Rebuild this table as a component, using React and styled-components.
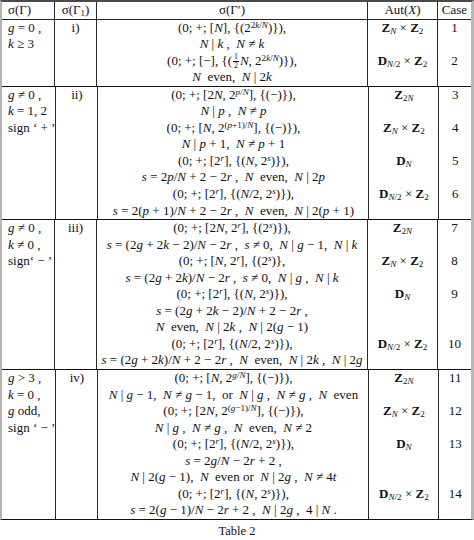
import React from "react";
import styled, { createGlobalStyle } from "styled-components";

const GlobalStyle = createGlobalStyle`
  html, body { margin: 0; padding: 0; background: #fff; }
  body {
    font-family: "Liberation Serif", "DejaVu Serif", serif;
    color: #111;
  }
`;

const LINE = 16.55;

// tiny math markup: single letters italic, words upright, ^{..} sup, _{..} sub
function parse(s, base = 0) {
  const out = [];
  let i = 0;
  let buf = "";
  const flush = (k) => {
    if (buf) {
      out.push(<span key={base + "t" + k}>{buf}</span>);
      buf = "";
    }
  };
  while (i < s.length) {
    const c = s[i];
    if ((c === "^" || c === "_") && s[i + 1] === "{") {
      flush(i);
      let depth = 1;
      let j = i + 2;
      while (j < s.length && depth) {
        if (s[j] === "{") depth++;
        else if (s[j] === "}") depth--;
        j++;
      }
      const inner = parse(s.slice(i + 2, j - 1), base + "-" + i);
      out.push(
        c === "^" ? <Sup key={base + "s" + i}>{inner}</Sup> : <Sub key={base + "s" + i}>{inner}</Sub>
      );
      i = j;
      continue;
    }
    if (c === "½") {
      flush(i);
      out.push(
        <Frac key={base + "f" + i}>
          <span>1</span>
          <span>2</span>
        </Frac>
      );
      i++;
      continue;
    }
    if (/[A-Za-z]/.test(c)) {
      flush(i);
      let j = i;
      while (j < s.length && /[A-Za-z]/.test(s[j])) j++;
      const w = s.slice(i, j);
      out.push(w.length === 1 ? <I key={base + "v" + i}>{w}</I> : <Word key={base + "w" + i}>{w}</Word>);
      i = j;
      continue;
    }
    buf += c;
    i++;
  }
  flush("end");
  return out;
}

const M = ({ t }) => <>{parse(t)}</>;

const G = ({ n, s }) => (
  <>
    <B>{n}</B>
    <Sub>{parse(s)}</Sub>
  </>
);

const ZN = () => <G n="Z" s="N" />;
const Z2N = () => <G n="Z" s="2N" />;
const Z2 = () => <G n="Z" s="2" />;
const DN = () => <G n="D" s="N" />;
const DN2 = () => <G n="D" s="N/2" />;

const aut = {
  zn: (
    <>
      <ZN /> × <Z2 />
    </>
  ),
  z2n: <Z2N />,
  dn: <DN />,
  dn2: (
    <>
      <DN2 /> × <Z2 />
    </>
  ),
};

const blocks = [
  {
    left: ["g = 0 ,", "k ≥ 3"],
    sub: "i)",
    lines: [
      "(0; +; [N], {(2^{2k/N})}),",
      "N | k ,  N ≠ k",
      "(0; +; [−], {(½N, 2^{2k/N})}),",
      "N  even,  N | 2k",
    ],
    marks: [
      [0, "zn", 1],
      [2, "dn2", 2],
    ],
  },
  {
    left: ["g ≠ 0 ,", "k = 1, 2", "sign ‘ + ’"],
    sub: "ii)",
    lines: [
      "(0; +; [2N, 2^{p/N}], {(−)}),",
      "N | p ,  N ≠ p",
      "(0; +; [N, 2^{(p+1)/N}], {(−)}),",
      "N | p + 1,  N ≠ p + 1",
      "(0; +; [2^{r}], {(N, 2^{s})}),",
      "s = 2p/N + 2 − 2r ,  N  even,  N | 2p",
      "(0; +; [2^{r}], {(N/2, 2^{s})}),",
      "s = 2(p + 1)/N + 2 − 2r ,  N  even,  N | 2(p + 1)",
    ],
    marks: [
      [0, "z2n", 3],
      [2, "zn", 4],
      [4, "dn", 5],
      [6, "dn2", 6],
    ],
  },
  {
    left: ["g ≠ 0 ,", "k ≠ 0 ,", "sign‘ − ’"],
    sub: "iii)",
    lines: [
      "(0; +; [2N, 2^{r}], {(2^{s})}),",
      "s = (2g + 2k − 2)/N − 2r ,  s ≠ 0,  N | g − 1,  N | k",
      "(0; +; [N, 2^{r}], {(2^{s})},",
      "s = (2g + 2k)/N − 2r ,  s ≠ 0,  N | g ,  N | k",
      "(0; +; [2^{r}], {(N, 2^{s})}),",
      "s = (2g + 2k − 2)/N + 2 − 2r ,",
      "N  even,  N | 2k ,  N | 2(g − 1)",
      "(0; +; [2^{r}], {(N/2, 2^{s})}),",
      "s = (2g + 2k)/N + 2 − 2r ,  N  even,  N | 2k ,  N | 2g",
    ],
    marks: [
      [0, "z2n", 7],
      [2, "zn", 8],
      [4, "dn", 9],
      [7, "dn2", 10],
    ],
  },
  {
    left: ["g > 3 ,", "k = 0 ,", "g odd,", "sign ‘ − ’"],
    sub: "iv)",
    lines: [
      "(0; +; [N, 2^{g/N}], {(−)}),",
      "N | g − 1,  N ≠ g − 1,  or  N | g ,  N ≠ g ,  N  even",
      "(0; +; [2N, 2^{(g−1)/N}], {(−)}),",
      "N | g ,  N ≠ g ,  N  even,  N ≠ 2",
      "(0; +; [2^{r}], {(N/2, 2^{s})}),",
      "s = 2g/N − 2r + 2 ,",
      "N | 2(g − 1),  N  even or  N | 2g ,  N ≠ 4t",
      "(0; +; [2^{r}], {(N, 2^{s})}),",
      "s = 2(g − 1)/N − 2r + 2 ,  N | 2g ,  4 | N .",
    ],
    marks: [
      [0, "z2n", 11],
      [2, "zn", 12],
      [4, "dn", 13],
      [7, "dn2", 14],
    ],
  },
];

export default function App() {
  return (
    <Page>
      <GlobalStyle />
      <Table>
        <Row $header>
          <Cell $w={53} $align="left">
            <Line>
              <M t="σ(Γ)" />
            </Line>
          </Cell>
          <Cell $w={42}>
            <Line>
              σ(Γ<Sub>1</Sub>)
            </Line>
          </Cell>
          <Cell $w={271}>
            <Line>σ(Γ′)</Line>
          </Cell>
          <Cell $w={70}>
            <Line>
              Aut(<I>X</I>)
            </Line>
          </Cell>
          <Cell $w={33} $last>
            <Line>Case</Line>
          </Cell>
        </Row>
        {blocks.map((b, bi) => {
          const slots = b.lines.map(() => null);
          const cases = b.lines.map(() => null);
          b.marks.forEach(([idx, key, num]) => {
            slots[idx] = aut[key];
            cases[idx] = num;
          });
          return (
            <Row key={bi}>
              <Cell $w={53} $align="left">
                {b.left.map((l, i) => (
                  <Line key={i}>
                    <M t={l} />
                  </Line>
                ))}
              </Cell>
              <Cell $w={42}>
                <Line>{b.sub}</Line>
              </Cell>
              <Cell $w={271}>
                {b.lines.map((l, i) => (
                  <Line key={i}>
                    <M t={l} />
                  </Line>
                ))}
              </Cell>
              <Cell $w={70}>
                {slots.map((s, i) => (
                  <Line key={i}>{s}</Line>
                ))}
              </Cell>
              <Cell $w={33} $last>
                {cases.map((c, i) => (
                  <Line key={i}>{c}</Line>
                ))}
              </Cell>
            </Row>
          );
        })}
      </Table>
      <Caption>Table 2</Caption>
    </Page>
  );
}

const Page = styled.div`
  width: 474px;
  height: 540px;
  overflow: hidden;
  font-size: 13px;
`;

const Table = styled.div`
  display: flex;
  flex-direction: column;
  border-top: 2px solid #4a4a4a;
  border-left: 2px solid #b4b4b4;
  border-right: 3px solid #b8b8b8;
  border-bottom: 1.5px solid #111;
`;

const Row = styled.div`
  display: flex;
  align-items: stretch;
  border-bottom: ${(p) => (p.$header ? "1px solid #222" : "none")};
  & + & {
    border-top: 1.5px solid #111;
  }
  &:first-child + & {
    border-top: none;
  }
`;

const Cell = styled.div`
  flex: ${(p) => (p.$last ? "1 1 auto" : `0 0 ${p.$w}px`)};
  box-sizing: border-box;
  border-right: ${(p) => (p.$last ? "none" : "1px solid #2a2a2a")};
  text-align: ${(p) => p.$align || "center"};
  padding-left: ${(p) => (p.$align === "left" ? "6px" : "0")};
  white-space: pre;
`;

const Line = styled.div`
  height: ${LINE}px;
  line-height: ${LINE}px;
`;

const I = styled.i`
  font-style: italic;
`;

const Word = styled.span`
  font-style: normal;
`;

const B = styled.b`
  font-weight: bold;
`;

const Sup = styled.sup`
  font-size: 0.7em;
  line-height: 0;
  vertical-align: 0.45em;
`;

const Sub = styled.sub`
  font-size: 0.7em;
  line-height: 0;
  vertical-align: -0.25em;
`;

const Frac = styled.span`
  display: inline-flex;
  flex-direction: column;
  align-items: center;
  vertical-align: middle;
  font-size: 0.6em;
  line-height: 1;
  margin: 0 1px;
  & > span:first-child {
    border-bottom: 0.5px solid currentColor;
    padding: 0 1px;
  }
`;

const Caption = styled.div`
  text-align: center;
  font-size: 12.5px;
  margin-top: 4px;
`;
